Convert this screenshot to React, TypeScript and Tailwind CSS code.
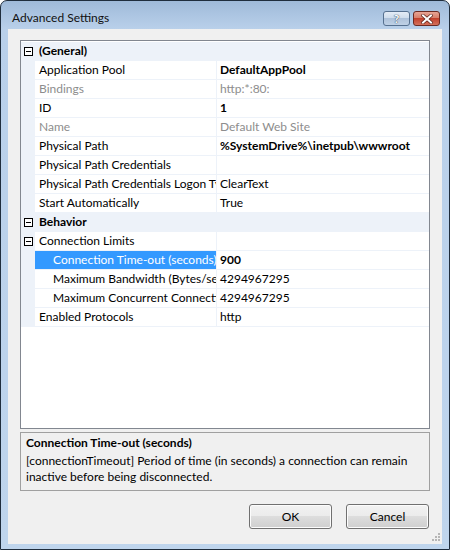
import React from "react";

type Row = {
  cat?: boolean;
  name: string;
  value?: string;
  expand?: boolean;
  indent?: boolean;
  bold?: boolean;
  disabled?: boolean;
  selected?: boolean;
};

const rows: Row[] = [
  { cat: true, name: "(General)" },
  { name: "Application Pool", value: "DefaultAppPool", bold: true },
  { name: "Bindings", value: "http:*:80:", disabled: true },
  { name: "ID", value: "1", bold: true },
  { name: "Name", value: "Default Web Site", disabled: true },
  { name: "Physical Path", value: "%SystemDrive%\\inetpub\\wwwroot", bold: true },
  { name: "Physical Path Credentials", value: "" },
  { name: "Physical Path Credentials Logon Type", value: "ClearText" },
  { name: "Start Automatically", value: "True" },
  { cat: true, name: "Behavior" },
  { name: "Connection Limits", value: "", expand: true },
  { name: "Connection Time-out (seconds)", value: "900", bold: true, indent: true, selected: true },
  { name: "Maximum Bandwidth (Bytes/second)", value: "4294967295", indent: true },
  { name: "Maximum Concurrent Connections", value: "4294967295", indent: true },
  { name: "Enabled Protocols", value: "http" },
];

function Minus() {
  return (
    <svg width="9" height="9" viewBox="0 0 9 9" className="block">
      <rect x="0.5" y="0.5" width="8" height="8" fill="#ffffff" stroke="#000000" strokeWidth="1" />
      <rect x="2" y="4" width="5" height="1" fill="#000000" />
    </svg>
  );
}

function GridRow({ r }: { r: Row }) {
  if (r.cat) {
    return (
      <div className="flex h-[19px] bg-[#edf2f9]">
        <div className="w-[14px] flex items-center justify-center pl-[1px]">
          <Minus />
        </div>
        <div className="pl-[4px] font-bold leading-[18px]">{r.name}</div>
      </div>
    );
  }
  return (
    <div className="flex h-[19px]">
      <div className="w-[14px] bg-[#edf2f9] flex items-center justify-center pl-[1px] pb-[1px]">
        {r.expand ? <Minus /> : null}
      </div>
      <div
        className={
          "w-[181px] h-[19px] border-b border-[#edf2f9] overflow-hidden whitespace-nowrap leading-[18px] " +
          (r.indent ? "pl-[18px] " : "pl-[4px] ") +
          (r.selected ? "bg-[#3399ff] text-white " : "bg-white ") +
          (r.disabled ? "text-[#8d8d8d]" : r.selected ? "" : "text-black")
        }
      >
        {r.name}
      </div>
      <div
        className={
          "flex-1 h-[19px] border-b border-l border-[#edf2f9] bg-white pl-[3px] leading-[18px] overflow-hidden whitespace-nowrap " +
          (r.bold ? "font-bold " : "") +
          (r.disabled ? "text-[#8d8d8d]" : "text-black")
        }
      >
        {r.value}
      </div>
    </div>
  );
}

function WinButton({ label }: { label: string }) {
  return (
    <div className="w-[83px] h-[25px] rounded-[3px] border border-[#707070] bg-[linear-gradient(to_bottom,#f2f2f2_0%,#ebebeb_50%,#dddddd_50%,#cfcfcf_100%)] shadow-[inset_0_0_0_1px_#fcfcfc] flex items-center justify-center text-black">
      {label}
    </div>
  );
}

export default function App() {
  return (
    <div className="w-[450px] h-[550px] font-['Lato',sans-serif] text-[12px] text-black">
      <div className="w-[450px] h-[550px] flex flex-col rounded-t-[7px] border border-[#1f2d3d] bg-[linear-gradient(to_bottom,#9fbad9_0px,#b9d0ea_28px,#bfd5ed_100%)]">
        <div className="h-[28px] flex items-start pl-[11px] pr-[9px]">
          <span className="mt-[9px] text-[12px] leading-[15px] text-[#111]">Advanced Settings</span>
          <div className="ml-auto mt-[10px] flex gap-[3px]">
            <div className="w-[27px] h-[15px] rounded-[3px] border border-[#56708f] bg-[linear-gradient(to_bottom,#e4ecf6_0%,#cddbeb_50%,#aec2da_50%,#bfd1e6_100%)] flex items-center justify-center text-[12px] font-bold leading-none text-white [text-shadow:0_0_1px_#2b3e57,0_0_1px_#2b3e57]">
              ?
            </div>
            <div className="w-[27px] h-[15px] rounded-[3px] border border-[#6b2a22] bg-[linear-gradient(to_bottom,#e8a595_0%,#d57a66_50%,#c2412d_50%,#d4705a_100%)] flex items-center justify-center">
              <svg width="12" height="10" viewBox="0 0 12 10">
                <path d="M2 1.5 L10 8.5 M10 1.5 L2 8.5" stroke="#5a2018" strokeWidth="3.4" strokeLinecap="square" />
                <path d="M2 1.5 L10 8.5 M10 1.5 L2 8.5" stroke="#ffffff" strokeWidth="2" strokeLinecap="square" />
              </svg>
            </div>
          </div>
        </div>
        <div className="relative mx-[7px] mb-[5px] flex-1 bg-[#f0f0f0] px-[12px] pt-[11px] flex flex-col">
          <div className="h-[389px] border border-[#828790] bg-white pt-[1px] flex flex-col">
            {rows.map((r, i) => (
              <GridRow key={i} r={r} />
            ))}
          </div>
          <div className="mt-[3px] h-[59px] border border-[#a0a0a0] bg-[#f0f0f0] pl-[5px] pt-[2px]">
            <div className="font-bold leading-[16px]">Connection Time-out (seconds)</div>
            <div className="mt-[2px] leading-[16px]">
              [connectionTimeout] Period of time (in seconds) a connection can remain inactive before being disconnected.
            </div>
          </div>
          <div className="mt-[13px] flex justify-end gap-[14px] pr-[1px]">
            <WinButton label="OK" />
            <WinButton label="Cancel" />
          </div>
          <svg className="absolute right-[1px] bottom-[2px]" width="10" height="10" viewBox="0 0 10 10">
            <rect x="7" y="1" width="2" height="2" fill="#b5b5b5" />
            <rect x="4" y="4" width="2" height="2" fill="#b5b5b5" />
            <rect x="7" y="4" width="2" height="2" fill="#b5b5b5" />
            <rect x="1" y="7" width="2" height="2" fill="#b5b5b5" />
            <rect x="4" y="7" width="2" height="2" fill="#b5b5b5" />
            <rect x="7" y="7" width="2" height="2" fill="#b5b5b5" />
          </svg>
        </div>
      </div>
    </div>
  );
}
